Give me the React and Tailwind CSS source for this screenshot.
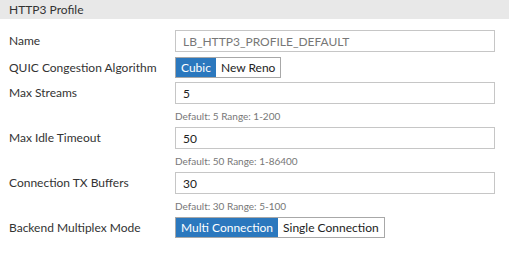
import React, { useState } from 'react';

const font = { fontFamily: 'Lato, "Open Sans", sans-serif' };

const Segmented = ({ options, value, onChange }) => (
  <div className="flex h-[21px] border border-[#a8a8a8] w-fit">
    {options.map((opt) => (
      <button
        key={opt}
        onClick={() => onChange(opt)}
        className={`px-[5px] text-[12px] leading-[19px] ${
          value === opt ? 'bg-[#2b78be] text-white' : 'bg-white text-[#222]'
        }`}
      >
        {opt}
      </button>
    ))}
  </div>
);

const Label = ({ children, h = 'h-[22px]' }) => (
  <div className={`w-[175px] shrink-0 pl-[9px] ${h} flex items-center text-[12px] text-[#333]`}>{children}</div>
);

const Field = ({ label, children, hint }) => (
  <div className="flex">
    <Label>{label}</Label>
    <div className="flex-1">
      {children}
      {hint && <div className="h-[23px] pt-[6px] text-[10px] leading-[12px] text-[#777]">{hint}</div>}
    </div>
  </div>
);

const TextInput = ({ value, disabled }) => (
  <input
    readOnly
    value={value}
    className={`block w-[320px] h-[22px] border border-[#c6c6c6] px-[7px] text-[12px] outline-none ${
      disabled ? 'text-[#777]' : 'text-[#222]'
    }`}
    style={font}
  />
);

export default function App() {
  const [algo, setAlgo] = useState('Cubic');
  const [mux, setMux] = useState('Multi Connection');

  return (
    <div className="w-[509px] h-[253px] bg-white" style={font}>
      <div className="h-[19px] bg-[#e8e8e8] pl-[9px] text-[12px] leading-[19px] text-[#333]">HTTP3 Profile</div>
      <div className="pt-[11px] flex flex-col">
        <Field label="Name">
          <TextInput value="LB_HTTP3_PROFILE_DEFAULT" disabled />
        </Field>
        <div className="mt-[5px] flex">
          <Label h="h-[21px]">QUIC Congestion Algorithm</Label>
          <Segmented options={['Cubic', 'New Reno']} value={algo} onChange={setAlgo} />
        </div>
        <div className="mt-[4px]">
          <Field label="Max Streams" hint="Default: 5 Range: 1-200">
            <TextInput value="5" />
          </Field>
        </div>
        <Field label="Max Idle Timeout" hint="Default: 50 Range: 1-86400">
          <TextInput value="50" />
        </Field>
        <Field label="Connection TX Buffers" hint="Default: 30 Range: 5-100">
          <TextInput value="30" />
        </Field>
        <div className="flex">
          <Label h="h-[21px]">Backend Multiplex Mode</Label>
          <Segmented options={['Multi Connection', 'Single Connection']} value={mux} onChange={setMux} />
        </div>
      </div>
    </div>
  );
}
